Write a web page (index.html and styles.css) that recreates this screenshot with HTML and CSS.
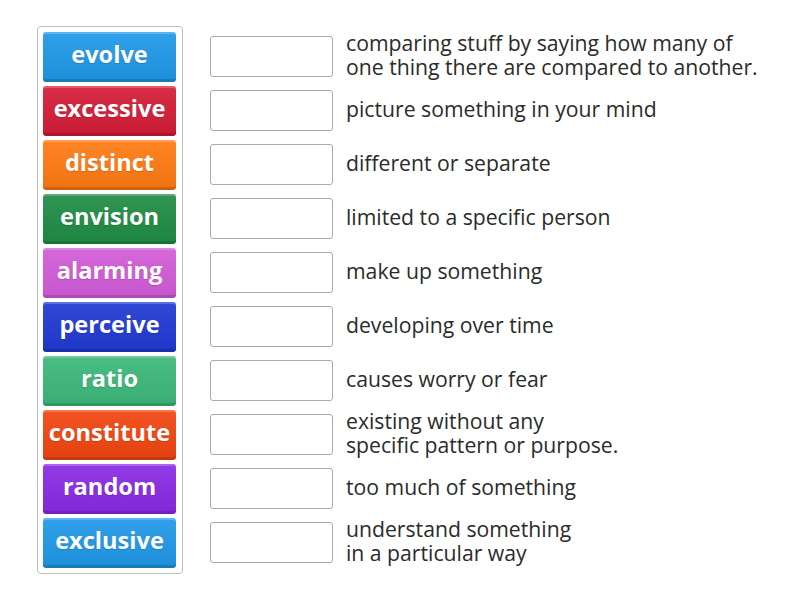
FILE: index.html
```html
<!DOCTYPE html>
<html>
<head>
<meta charset="utf-8">
<link rel="stylesheet" href="styles.css">
</head>
<body>
<div class="page">
  <div class="bank">
    <div class="tile t-blue">evolve</div>
    <div class="tile t-red">excessive</div>
    <div class="tile t-orange">distinct</div>
    <div class="tile t-green">envision</div>
    <div class="tile t-pink">alarming</div>
    <div class="tile t-indigo">perceive</div>
    <div class="tile t-mint">ratio</div>
    <div class="tile t-vermil">constitute</div>
    <div class="tile t-purple">random</div>
    <div class="tile t-blue">exclusive</div>
  </div>
  <div class="rows">
    <div class="row"><div class="slot"></div><div class="def">comparing stuff by saying how many of<br>one thing there are compared to another.</div></div>
    <div class="row"><div class="slot"></div><div class="def">picture something in your mind</div></div>
    <div class="row"><div class="slot"></div><div class="def">different or separate</div></div>
    <div class="row"><div class="slot"></div><div class="def">limited to a specific person</div></div>
    <div class="row"><div class="slot"></div><div class="def">make up something</div></div>
    <div class="row"><div class="slot"></div><div class="def">developing over time</div></div>
    <div class="row"><div class="slot"></div><div class="def">causes worry or fear</div></div>
    <div class="row"><div class="slot"></div><div class="def">existing without any<br>specific pattern or purpose.</div></div>
    <div class="row"><div class="slot"></div><div class="def">too much of something</div></div>
    <div class="row"><div class="slot"></div><div class="def">understand something<br>in a particular way</div></div>
  </div>
</div>
</body>
</html>
```
FILE: styles.css
```css
html, body {
  margin: 0;
  padding: 0;
  background: #ffffff;
}
body {
  font-family: "Open Sans", "Liberation Sans", sans-serif;
}
.page {
  display: flex;
  align-items: flex-start;
  padding: 26px 0 0 37px;
}
.bank {
  display: flex;
  flex-direction: column;
  gap: 4px;
  padding: 5px 6px 5px 5px;
  border: 1px solid #bdbdbd;
  border-radius: 4px;
}
.tile {
  width: 133px;
  height: 50px;
  box-sizing: border-box;
  border-radius: 3px;
  color: #ffffff;
  font-weight: 700;
  font-size: 23.6px;
  line-height: 45px;
  text-align: center;
  white-space: nowrap;
  text-shadow: 0 1px 1px rgba(0,0,0,0.15);
  box-shadow: inset 0 2px 0 rgba(255,255,255,0.22), inset 0 -3px 0 rgba(0,0,0,0.14);
  background-image: linear-gradient(to bottom, rgba(255,255,255,0.08), rgba(0,0,0,0.06));
}
.t-blue { background-color: #1f98e8; }
.t-red { background-color: #d51c37; }
.t-orange { background-color: #ff7a12; }
.t-green { background-color: #1f8c45; }
.t-pink { background-color: #d25bd8; }
.t-indigo { background-color: #2039d3; }
.t-mint { background-color: #3cb87a; }
.t-vermil { background-color: #f24510; }
.t-purple { background-color: #892ae4; }
.rows {
  display: flex;
  flex-direction: column;
  margin-left: 27px;
  padding-top: 4px;
}
.row {
  display: flex;
  align-items: center;
  height: 54px;
}
.slot {
  flex: none;
  width: 123px;
  height: 41px;
  box-sizing: border-box;
  border: 1px solid #a9a9a9;
  border-radius: 3px;
  background: #ffffff;
  margin-top: -1px;
}
.def {
  margin-left: 13px;
  margin-top: -4px;
  font-size: 21.2px;
  line-height: 24px;
  color: #2b2b2b;
  white-space: nowrap;
}
```
